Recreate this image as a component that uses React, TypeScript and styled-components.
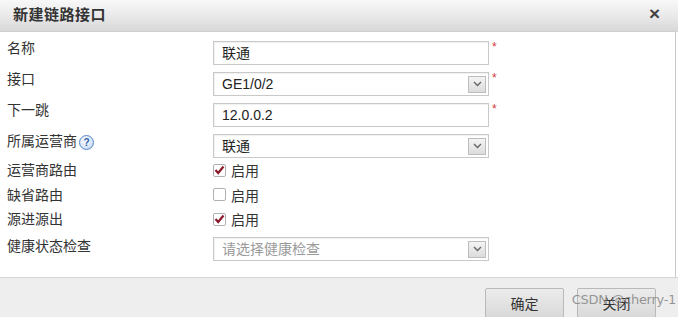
import React from 'react';
import styled, { createGlobalStyle, css } from 'styled-components';

const GlobalStyle = createGlobalStyle`
  html, body {
    margin: 0;
    padding: 0;
    background: #ffffff;
  }
  body {
    font-family: "Liberation Sans", "Noto Sans CJK SC", sans-serif;
  }
`;

const ChevronDown = () => (
  <svg width="9" height="6" viewBox="0 0 9 6">
    <path d="M1 1 L4.5 4.5 L8 1" fill="none" stroke="#666" strokeWidth="1.4" />
  </svg>
);

const Check = () => (
  <svg width="11" height="10" viewBox="0 0 11 10">
    <path d="M1.5 5 L4.2 8 L9.5 1.5" fill="none" stroke="#8a1a2a" strokeWidth="2.2" />
  </svg>
);

const App = () => {
  return (
    <>
      <GlobalStyle />
      <Dialog>
        <Header>
          <Title>新建链路接口</Title>
          <CloseX>×</CloseX>
        </Header>
        <Body>
          <Row>
            <Label>名称</Label>
            <Field>
              <TextBox>联通</TextBox>
            </Field>
            <Required>*</Required>
          </Row>
          <Row>
            <Label>接口</Label>
            <Field>
              <TextBox>
                GE1/0/2
                <ArrowButton>
                  <ChevronDown />
                </ArrowButton>
              </TextBox>
            </Field>
            <Required>*</Required>
          </Row>
          <Row>
            <Label>下一跳</Label>
            <Field>
              <TextBox>12.0.0.2</TextBox>
            </Field>
            <Required>*</Required>
          </Row>
          <Row short>
            <Label>
              所属运营商
              <Help>?</Help>
            </Label>
            <Field>
              <TextBox>
                联通
                <ArrowButton>
                  <ChevronDown />
                </ArrowButton>
              </TextBox>
            </Field>
          </Row>
          <CheckRow>
            <Label flat>运营商路由</Label>
            <CheckLabel>
              <Box>
                <Check />
              </Box>
              启用
            </CheckLabel>
          </CheckRow>
          <CheckRow>
            <Label flat>缺省路由</Label>
            <CheckLabel>
              <Box />
              启用
            </CheckLabel>
          </CheckRow>
          <CheckRow>
            <Label flat>源进源出</Label>
            <CheckLabel>
              <Box>
                <Check />
              </Box>
              启用
            </CheckLabel>
          </CheckRow>
          <Row last>
            <Label flat>健康状态检查</Label>
            <Field>
              <TextBox placeholder>
                请选择健康检查
                <ArrowButton>
                  <ChevronDown />
                </ArrowButton>
              </TextBox>
            </Field>
          </Row>
        </Body>
        <Footer>
          <Button>确定</Button>
          <Button>关闭</Button>
          <Watermark>CSDN @cherry-1</Watermark>
        </Footer>
      </Dialog>
    </>
  );
};

const Dialog = styled.div`
  width: 678px;
  height: 317px;
  display: flex;
  flex-direction: column;
  position: relative;
  overflow: hidden;
  color: #333;
`;

const Header = styled.div`
  height: 32px;
  flex: none;
  display: flex;
  align-items: center;
  justify-content: space-between;
  padding: 0 18px 0 13px;
  box-sizing: border-box;
  background: linear-gradient(to bottom, #f8f8f8 0%, #e8e8e8 55%, #d8d8d8 100%);
  border-bottom: 1px solid #d0d0d0;
`;

const Title = styled.div`
  font-size: 15px;
  font-weight: bold;
  color: #333;
  letter-spacing: 0.5px;
  margin-top: -4px;
`;

const CloseX = styled.div`
  font-size: 19px;
  font-weight: bold;
  color: #444;
  line-height: 1;
  margin-top: -4px;
`;

const Body = styled.div`
  flex: 1;
  padding: 9px 0 0 7px;
  box-sizing: border-box;
  background: #fff;
  border-right: 1px solid #c8c8c8;
  margin-right: 2px;
`;

const Row = styled.div<{ last?: boolean; short?: boolean }>`
  display: flex;
  align-items: flex-start;
  height: ${(p) => (p.short ? '24px' : '31px')};
  ${(p) =>
    p.last &&
    css`
      margin-top: 5.5px;
    `}
`;

const CheckRow = styled.div`
  display: flex;
  align-items: center;
  height: 24.5px;
`;

const Label = styled.div<{ flat?: boolean }>`
  width: 206px;
  flex: none;
  font-size: 14px;
  line-height: 18px;
  color: #333;
  display: flex;
  align-items: center;
  margin-top: ${(p) => (p.flat ? '0' : '-2px')};
`;

const Help = styled.span`
  width: 13px;
  height: 13px;
  margin-left: 2px;
  margin-top: 3px;
  border-radius: 50%;
  border: 1px solid #5a86c8;
  background: radial-gradient(circle at 40% 35%, #ffffff 0%, #d6e4f7 60%, #a9c3ea 100%);
  color: #2d5da6;
  font-size: 10px;
  font-weight: bold;
  line-height: 13px;
  text-align: center;
  box-sizing: content-box;
`;

const Field = styled.div`
  width: 276px;
  flex: none;
`;

const TextBox = styled.div<{ placeholder?: boolean }>`
  position: relative;
  height: 24px;
  box-sizing: border-box;
  border: 1px solid #c9c9c9;
  box-shadow: inset 1px 1px 1px rgba(0, 0, 0, 0.06);
  background: #fff;
  padding: 0 8px;
  font-size: 14px;
  line-height: 22px;
  color: ${(p) => (p.placeholder ? '#9a9a9a' : '#222')};
  display: flex;
  align-items: center;
  justify-content: space-between;
`;

const ArrowButton = styled.div`
  width: 18px;
  height: 17px;
  margin-right: -6px;
  box-sizing: border-box;
  border: 1px solid #bdbdbd;
  background: linear-gradient(to bottom, #f4f4f4, #dcdcdc);
  display: flex;
  align-items: center;
  justify-content: center;
`;

const Required = styled.div`
  color: #d23a3a;
  font-size: 12px;
  margin-left: 3px;
  line-height: 12px;
`;

const CheckLabel = styled.div`
  display: flex;
  align-items: center;
  gap: 5px;
  font-size: 14px;
  color: #333;
`;

const Box = styled.div`
  width: 13px;
  height: 13px;
  box-sizing: border-box;
  border: 1px solid #b0b0b0;
  border-radius: 2px;
  background: #fff;
  display: flex;
  align-items: center;
  justify-content: center;
`;

const Footer = styled.div`
  height: 40px;
  flex: none;
  border-top: 1px solid #d6d6d6;
  background: #eeeeee;
  display: flex;
  align-items: flex-start;
  justify-content: flex-end;
  gap: 13px;
  padding: 10px 22px 0 0;
  box-sizing: border-box;
  position: relative;
`;

const Button = styled.div`
  width: 79px;
  height: 30px;
  box-sizing: border-box;
  border: 1px solid #b9b9b9;
  border-radius: 2px;
  background: linear-gradient(to bottom, #ececec, #d9d9d9);
  font-size: 14px;
  color: #333;
  display: flex;
  align-items: center;
  justify-content: center;
`;

const Watermark = styled.div`
  position: absolute;
  right: 2px;
  top: 14px;
  font-size: 13px;
  color: rgba(120, 120, 120, 0.75);
  font-family: "DejaVu Sans", "Noto Sans CJK SC", sans-serif;
  letter-spacing: -0.3px;
`;

export default App;
